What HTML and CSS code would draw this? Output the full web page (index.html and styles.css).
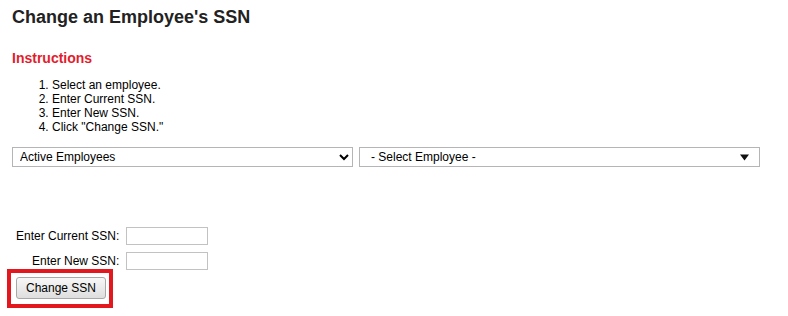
FILE: index.html
```html
<!DOCTYPE html>
<html lang="en">
<head>
    <meta charset="UTF-8">
    <title>Change an Employee's SSN</title>
    <link rel="stylesheet" href="styles.css">
</head>
<body>
    <h1 class="page-title">Change an Employee's SSN</h1>

    <h2 class="section-title">Instructions</h2>
    <ol class="steps">
        <li>Select an employee.</li>
        <li>Enter Current SSN.</li>
        <li>Enter New SSN.</li>
        <li>Click "Change SSN."</li>
    </ol>

    <div class="pickers">
        <select class="status-select">
            <option>Active Employees</option>
            <option>Inactive Employees</option>
            <option>All Employees</option>
        </select>
        <div class="employee-select">
            <span>- Select Employee -</span>
            <svg class="caret" width="9" height="7" viewBox="0 0 9 7">
                <path d="M0 0.5 L9 0.5 L4.5 6.5 Z" fill="#111"/>
            </svg>
        </div>
    </div>

    <div class="ssn-form">
        <label class="ssn-label" for="curSsn">Enter Current SSN:</label>
        <input class="ssn-input" id="curSsn" type="text">
        <label class="ssn-label" for="newSsn">Enter New SSN:</label>
        <input class="ssn-input" id="newSsn" type="text">
        <div class="btn-cell">
            <button class="change-btn" type="button">Change SSN</button>
        </div>
    </div>
</body>
</html>
```

FILE: styles.css
```css
body, html {
    margin: 0;
    padding: 0;
    background-color: #ffffff;
    font-family: "Liberation Sans", Arial, sans-serif;
    color: #000;
}
html {
    height: 100%;
}
body {
    box-sizing: border-box;
    min-height: 100%;
    padding: 0 12px 20px 12px;
}
.page-title {
    margin: 7px 0 0 0;
    font-size: 18px;
    line-height: 21px;
    font-weight: bold;
    color: #222222;
}
.section-title {
    margin: 22px 0 0 0;
    font-size: 14px;
    line-height: 16px;
    font-weight: bold;
    color: #e31c2d;
}
.steps {
    margin: 12px 0 0 0;
    padding-left: 40px;
    font-size: 12px;
    line-height: 14px;
}
.pickers {
    display: flex;
    gap: 6px;
    margin-top: 13px;
}
.status-select {
    width: 341px;
    height: 20px;
    margin: 0;
    padding: 0 8px 0 3px;
    border: 1px solid #b5b5b5;
    border-radius: 0;
    background-color: #fff;
    font-family: "Liberation Sans", Arial, sans-serif;
    font-size: 12px;
    color: #000;
}
.employee-select {
    box-sizing: border-box;
    width: 401px;
    height: 20px;
    border: 1px solid #b5b5b5;
    display: flex;
    align-items: center;
    justify-content: space-between;
    padding: 0 10px 0 11px;
    font-size: 12px;
}
.caret {
    display: block;
}
.ssn-form {
    display: grid;
    grid-template-columns: auto auto;
    justify-content: start;
    align-items: center;
    column-gap: 7px;
    row-gap: 7px;
    margin-top: 60px;
    padding-left: 4px;
    font-size: 12px;
}
.ssn-label {
    text-align: right;
}
.ssn-input {
    box-sizing: border-box;
    width: 82px;
    height: 18px;
    margin: 0;
    border: 1px solid #c2c2c2;
    padding: 0 3px;
    font-size: 12px;
}
.btn-cell {
    grid-column: 1 / 3;
    position: relative;
    justify-self: start;
}
.btn-cell::after {
    content: "";
    position: absolute;
    top: -8px;
    left: -9px;
    right: -7px;
    bottom: -9px;
    border: 4px solid #e3181f;
    pointer-events: none;
}
.change-btn {
    display: block;
    width: 90px;
    height: 22px;
    margin: 0;
    padding: 0;
    border: 1px solid #a8a8a8;
    border-radius: 3px;
    background: linear-gradient(#f7f7f7, #dedede);
    font-family: "Liberation Sans", Arial, sans-serif;
    font-size: 12px;
    color: #000;
}
```
